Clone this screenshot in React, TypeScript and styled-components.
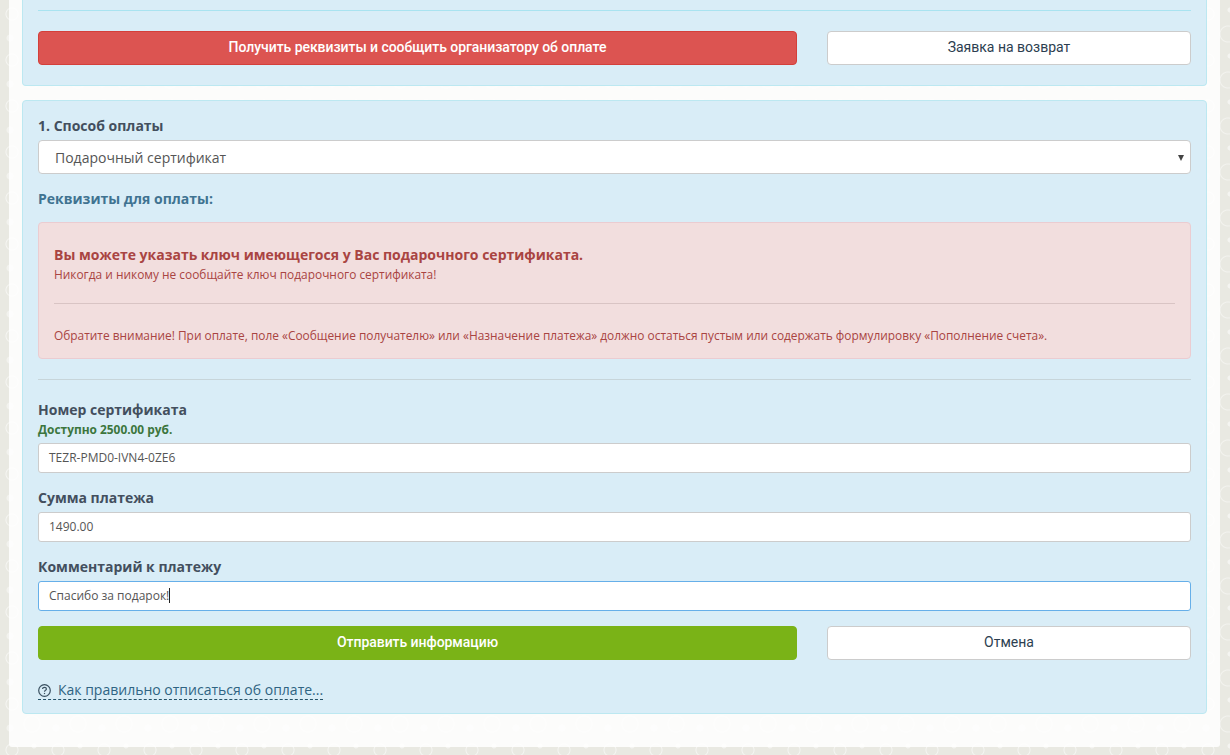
import React from "react";
import styled, { createGlobalStyle } from "styled-components";

const Global = createGlobalStyle`
  html, body { margin: 0; padding: 0; height: 755px; overflow: hidden; }
  html {
    background-color: #e9e9e2;
    background-image:
      radial-gradient(circle at 12px 14px, transparent 5px, rgba(255,255,255,.55) 6px, transparent 7px),
      radial-gradient(circle at 32px 34px, transparent 7px, rgba(255,255,255,.45) 8px, transparent 9px),
      radial-gradient(circle at 34px 10px, rgba(255,255,255,.5) 2px, transparent 3px),
      radial-gradient(circle at 10px 38px, rgba(255,255,255,.4) 3px, transparent 4px);
    background-size: 46px 46px;
  }
  * { box-sizing: border-box; }
  body { font-family: "Open Sans", "Liberation Sans", sans-serif; color: #34495e; }
`;

const Sheet = styled.main`
  width: 1211px;
  height: 747px;
  margin-left: 9px;
  padding: 0 13px;
  background: rgba(255, 255, 255, 0.86);
  border-radius: 0 0 3px 3px;
  display: flex;
  flex-direction: column;
  gap: 14px;
`;

const Panel = styled.section<{ $top?: boolean }>`
  background: #d9edf7;
  border: 1px solid #bce8f1;
  border-top-width: ${(p) => (p.$top ? 0 : 1)}px;
  border-radius: ${(p) => (p.$top ? "0 0 4px 4px" : "4px")};
  padding: ${(p) => (p.$top ? "10px 15px 20px" : "15px 15px 13px")};
`;

const TopRule = styled.hr`
  margin: 0 0 20px;
  border: 0;
  border-top: 1px solid #a9e3f0;
`;

const ButtonRow = styled.div`
  display: grid;
  grid-template-columns: 759px 364px;
  column-gap: 30px;
`;

const Button = styled.button<{ $kind: "danger" | "success" | "plain" }>`
  height: 34px;
  padding: 0 0 2px;
  border-radius: 4px;
  font-family: Roboto, "Liberation Sans", sans-serif;
  font-size: 14px;
  line-height: 20px;
  font-weight: ${(p) => (p.$kind === "plain" ? 400 : 500)};
  letter-spacing: ${(p) => (p.$kind === "plain" ? "0" : "-0.05px")};
  border: 1px solid
    ${(p) => (p.$kind === "danger" ? "#d43f3a" : p.$kind === "success" ? "#7ab317" : "#cccccc")};
  background: ${(p) => (p.$kind === "danger" ? "#dc5451" : p.$kind === "success" ? "#7ab317" : "#ffffff")};
  color: ${(p) => (p.$kind === "plain" ? "#2c3e50" : "#ffffff")};
`;

const FieldLabel = styled.div`
  font-size: 14px;
  line-height: 20px;
  font-weight: 700;
  color: #434f5e;
`;

const SelectBox = styled.div`
  position: relative;
  height: 34px;
  margin-top: 4px;
  padding-left: 16px;
  display: flex;
  align-items: center;
  background: #fff;
  border: 1px solid #ccc;
  border-radius: 4px;
  font-size: 14px;
  color: #555;
`;

const Caret = styled.span`
  position: absolute;
  right: 6px;
  top: 14px;
  width: 0;
  height: 0;
  border-left: 3px solid transparent;
  border-right: 3px solid transparent;
  border-top: 6px solid #444;
`;

const Subheading = styled.div`
  margin-top: 15px;
  font-size: 14px;
  line-height: 20px;
  font-weight: 700;
  color: #3f7391;
`;

const Alert = styled.div`
  margin-top: 13px;
  height: 137px;
  padding: 22px 15px 0;
  background: #f2dede;
  border: 1px solid #ebccd1;
  border-radius: 4px;
  color: #a94442;
`;

const AlertTitle = styled.div`
  font-size: 14px;
  line-height: 19px;
  font-weight: 700;
`;

const AlertText = styled.div`
  font-size: 11.9px;
  line-height: 20px;
  white-space: nowrap;
`;

const AlertRule = styled.hr`
  margin: 19px 0 21px;
  border: 0;
  border-top: 1px solid #d9c4c4;
`;

const Divider = styled.hr`
  margin: 20px 0 20px;
  border: 0;
  border-top: 1px solid #c7d5da;
`;

const Available = styled.div`
  margin-bottom: 5px;
  font-size: 11.9px;
  line-height: 18px;
  font-weight: 700;
  color: #3c763d;
`;

const Field = styled.div`
  margin-top: 15px;
`;

const InputBox = styled.div<{ $focus?: boolean }>`
  height: 30px;
  margin-top: 4px;
  padding: 0 0 2px 10px;
  display: flex;
  align-items: center;
  background: #fff;
  border: 1px solid ${(p) => (p.$focus ? "#66afe9" : "#ccc")};
  border-radius: 3px;
  font-size: 12px;
  color: #555;
`;

const TextCaret = styled.span`
  display: inline-block;
  width: 1px;
  height: 15px;
  background: #222;
`;

const ActionRow = styled(ButtonRow)`
  margin-top: 15px;
`;

const HelpLink = styled.a`
  margin-top: 21px;
  width: fit-content;
  display: flex;
  align-items: center;
  gap: 7px;
  font-size: 14px;
  line-height: 18px;
  color: #2f6483;
  border-bottom: 1px dashed #245269;
`;

const HelpIcon = () => (
  <svg width="13" height="13" viewBox="0 0 13 13" fill="none" stroke="#3a5060" strokeWidth="1.2">
    <circle cx="6.5" cy="6.5" r="5.8" />
    <path d="M4.6 5c0-1.1.9-1.7 1.9-1.7s1.9.6 1.9 1.6c0 1.4-1.9 1.3-1.9 2.8" />
    <path d="M6.5 8.9v1.2" />
  </svg>
);

export default function App() {
  return (
    <>
      <Global />
      <Sheet>
        <Panel $top>
          <TopRule />
          <ButtonRow>
            <Button $kind="danger">Получить реквизиты и сообщить организатору об оплате</Button>
            <Button $kind="plain">Заявка на возврат</Button>
          </ButtonRow>
        </Panel>
        <Panel>
          <FieldLabel>1. Способ оплаты</FieldLabel>
          <SelectBox>
            Подарочный сертификат
            <Caret />
          </SelectBox>
          <Subheading>Реквизиты для оплаты:</Subheading>
          <Alert>
            <AlertTitle>Вы можете указать ключ имеющегося у Вас подарочного сертификата.</AlertTitle>
            <AlertText>Никогда и никому не сообщайте ключ подарочного сертификата!</AlertText>
            <AlertRule />
            <AlertText>
              Обратите внимание! При оплате, поле «Сообщение получателю» или «Назначение платежа» должно остаться пустым или содержать формулировку «Пополнение счета».
            </AlertText>
          </Alert>
          <Divider />
          <FieldLabel>Номер сертификата</FieldLabel>
          <Available>Доступно 2500.00 руб.</Available>
          <InputBox>TEZR-PMD0-IVN4-0ZE6</InputBox>
          <Field>
            <FieldLabel>Сумма платежа</FieldLabel>
            <InputBox>1490.00</InputBox>
          </Field>
          <Field>
            <FieldLabel>Комментарий к платежу</FieldLabel>
            <InputBox $focus>
              Спасибо за подарок!
              <TextCaret />
            </InputBox>
          </Field>
          <ActionRow>
            <Button $kind="success">Отправить информацию</Button>
            <Button $kind="plain">Отмена</Button>
          </ActionRow>
          <HelpLink>
            <HelpIcon />
            Как правильно отписаться об оплате...
          </HelpLink>
        </Panel>
      </Sheet>
    </>
  );
}
